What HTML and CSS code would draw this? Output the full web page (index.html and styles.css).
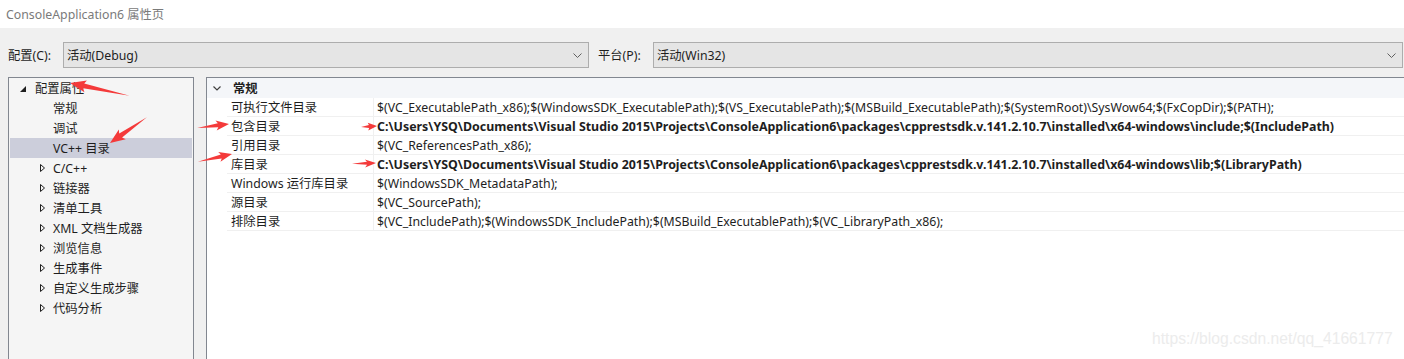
FILE: index.html
```html
<!DOCTYPE html>
<html>
    <head>
        <title>ConsoleApplication6 属性页</title>
        <link rel="stylesheet" href="styles.css">
    </head>
    <body>

        <!-- Titre -->
        <div class="titlebar">ConsoleApplication6 属性页</div>

        <!-- Configuration / plateforme -->
        <div class="config">
            <span class="label">配置(C):</span>
            <div class="combo combo-config">
                <span>活动(Debug)</span>
                <svg class="chevron" width="9" height="5" viewBox="0 0 9 5"><polyline points="0.5,0.5 4.5,4.5 8.5,0.5" fill="none" stroke="#606060" stroke-width="1"/></svg>
            </div>
            <span class="label label-platform">平台(P):</span>
            <div class="combo combo-platform">
                <span>活动(Win32)</span>
                <svg class="chevron" width="9" height="5" viewBox="0 0 9 5"><polyline points="0.5,0.5 4.5,4.5 8.5,0.5" fill="none" stroke="#606060" stroke-width="1"/></svg>
            </div>
        </div>

        <div class="main">
            <!-- Arbre -->
            <div class="tree">
                <div class="node root">
                    <svg class="expander" width="6" height="6" viewBox="0 0 6 6"><polygon points="6,0 6,6 0,6" fill="#1e1e1e"/></svg>
                    <span>配置属性</span>
                </div>
                <div class="node child"><span>常规</span></div>
                <div class="node child"><span>调试</span></div>
                <div class="node child selected"><span>VC++ 目录</span></div>
                <div class="node child folder"><svg class="collapsed" width="5" height="8" viewBox="0 0 5 8"><polygon points="0.5,0.5 4.5,4 0.5,7.5" fill="none" stroke="#1e1e1e" stroke-width="1"/></svg><span>C/C++</span></div>
                <div class="node child folder"><svg class="collapsed" width="5" height="8" viewBox="0 0 5 8"><polygon points="0.5,0.5 4.5,4 0.5,7.5" fill="none" stroke="#1e1e1e" stroke-width="1"/></svg><span>链接器</span></div>
                <div class="node child folder"><svg class="collapsed" width="5" height="8" viewBox="0 0 5 8"><polygon points="0.5,0.5 4.5,4 0.5,7.5" fill="none" stroke="#1e1e1e" stroke-width="1"/></svg><span>清单工具</span></div>
                <div class="node child folder"><svg class="collapsed" width="5" height="8" viewBox="0 0 5 8"><polygon points="0.5,0.5 4.5,4 0.5,7.5" fill="none" stroke="#1e1e1e" stroke-width="1"/></svg><span>XML 文档生成器</span></div>
                <div class="node child folder"><svg class="collapsed" width="5" height="8" viewBox="0 0 5 8"><polygon points="0.5,0.5 4.5,4 0.5,7.5" fill="none" stroke="#1e1e1e" stroke-width="1"/></svg><span>浏览信息</span></div>
                <div class="node child folder"><svg class="collapsed" width="5" height="8" viewBox="0 0 5 8"><polygon points="0.5,0.5 4.5,4 0.5,7.5" fill="none" stroke="#1e1e1e" stroke-width="1"/></svg><span>生成事件</span></div>
                <div class="node child folder"><svg class="collapsed" width="5" height="8" viewBox="0 0 5 8"><polygon points="0.5,0.5 4.5,4 0.5,7.5" fill="none" stroke="#1e1e1e" stroke-width="1"/></svg><span>自定义生成步骤</span></div>
                <div class="node child folder"><svg class="collapsed" width="5" height="8" viewBox="0 0 5 8"><polygon points="0.5,0.5 4.5,4 0.5,7.5" fill="none" stroke="#1e1e1e" stroke-width="1"/></svg><span>代码分析</span></div>
            </div>

            <!-- Grille de propriétés -->
            <div class="grid">
                <div class="category">
                    <svg class="cat-chevron" width="8" height="5" viewBox="0 0 8 5"><polyline points="0.5,0.5 4,4 7.5,0.5" fill="none" stroke="#404040" stroke-width="1.2"/></svg>
                    <span>常规</span>
                </div>
                <div class="prop"><div class="name">可执行文件目录</div><div class="value">$(VC_ExecutablePath_x86);$(WindowsSDK_ExecutablePath);$(VS_ExecutablePath);$(MSBuild_ExecutablePath);$(SystemRoot)\SysWow64;$(FxCopDir);$(PATH);</div></div>
                <div class="prop"><div class="name">包含目录</div><div class="value bold">C:\Users\YSQ\Documents\Visual Studio 2015\Projects\ConsoleApplication6\packages\cpprestsdk.v.141.2.10.7\installed\x64-windows\include;$(IncludePath)</div></div>
                <div class="prop"><div class="name">引用目录</div><div class="value">$(VC_ReferencesPath_x86);</div></div>
                <div class="prop"><div class="name">库目录</div><div class="value bold">C:\Users\YSQ\Documents\Visual Studio 2015\Projects\ConsoleApplication6\packages\cpprestsdk.v.141.2.10.7\installed\x64-windows\lib;$(LibraryPath)</div></div>
                <div class="prop"><div class="name">Windows 运行库目录</div><div class="value">$(WindowsSDK_MetadataPath);</div></div>
                <div class="prop"><div class="name">源目录</div><div class="value">$(VC_SourcePath);</div></div>
                <div class="prop"><div class="name">排除目录</div><div class="value">$(VC_IncludePath);$(WindowsSDK_IncludePath);$(MSBuild_ExecutablePath);$(VC_LibraryPath_x86);</div></div>
            </div>
        </div>

        <!-- Flèches rouges par-dessus la capture -->
        <svg class="arrows" width="1404" height="359" viewBox="0 0 1404 359">
            <g fill="#f43a3a">
                <polygon transform="translate(70,83) rotate(192)" points="0,0 -16,-6 -14,-2.5 -61,0 -14,2.5 -16,6"/>
                <polygon transform="translate(110,143) rotate(145)" points="0,0 -15,-6 -13,-2.5 -45,0 -13,2.5 -15,6"/>
                <polygon transform="translate(229,124) rotate(-7)" points="0,0 -13,-5 -11,-2 -32,0 -11,2 -13,5"/>
                <polygon transform="translate(232,154) rotate(-13)" points="0,0 -13,-5 -11,-2 -35,0 -11,2 -13,5"/>
                <polygon transform="translate(377,126) rotate(-4)" points="0,0 -9,-4 -8,-1.5 -16,0 -8,1.5 -9,4"/>
                <polygon transform="translate(376,163) rotate(-2)" points="0,0 -11,-4 -9,-1.5 -24,0 -9,1.5 -11,4"/>
            </g>
        </svg>

        <div class="watermark">https://blog.csdn.net/qq_41661777</div>

    </body>
</html>
```

FILE: styles.css
```css
body {
    margin: 0;
    background-color: #f0f0f0;
    font-family: "Noto Sans", "Noto Sans CJK SC", sans-serif;
    font-size: 12.3px;
    color: #1e1e1e;
    height: 359px;
    overflow: hidden;
    position: relative;
}

.titlebar {
    height: 28px;
    background-color: #ffffff;
    color: #7a7a7a;
    padding-left: 6px;
    display: flex;
    align-items: center;
}

.config {
    display: flex;
    align-items: center;
    margin-top: 14px;
    padding-left: 8px;
    height: 26px;
}

.label {
    width: 55px;
}

.label-platform {
    margin-left: 9px;
}

.combo {
    box-sizing: border-box;
    height: 26px;
    border: 1px solid #adadad;
    background-color: #e5e5e5;
    display: flex;
    align-items: center;
    justify-content: space-between;
    padding: 0 6px 0 3px;
}

.combo-config {
    width: 526px;
}

.combo-platform {
    width: 750px;
}

.main {
    display: flex;
    margin-top: 9px;
    padding-left: 8px;
    gap: 12px;
    height: 282px;
}

.tree {
    box-sizing: border-box;
    width: 186px;
    border: 1px solid #828790;
    border-bottom: none;
    background-color: #f5f5f5;
    padding: 0 1px;
}

.node {
    height: 20px;
    display: flex;
    align-items: center;
    white-space: nowrap;
}

.root {
    padding-left: 10px;
}

.root .expander {
    margin-right: 9px;
    margin-top: 1px;
}

.child {
    padding-left: 43px;
}

.folder {
    padding-left: 30px;
}

.folder .collapsed {
    margin-right: 8px;
}

.selected {
    background-color: #cccedb;
}

.grid {
    flex: 1;
    background-color: #ffffff;
    border-top: 1px solid #828790;
    border-left: 1px solid #828790;
}

.category {
    height: 20px;
    background-color: #f4f6f9;
    display: flex;
    align-items: center;
    padding-left: 6px;
    font-weight: bold;
}

.cat-chevron {
    margin-right: 12px;
}

.prop {
    display: flex;
    height: 19px;
    margin-left: 20px;
    border-bottom: 1px solid #f0f0f0;
    box-sizing: border-box;
    white-space: nowrap;
}

.name {
    width: 147px;
    padding-left: 4px;
    box-sizing: border-box;
    border-right: 1px solid #f0f0f0;
    display: flex;
    align-items: center;
}

.value {
    padding-left: 3px;
    display: flex;
    align-items: center;
}

.bold {
    font-weight: bold;
    font-size: 12.4px;
}

.arrows {
    position: absolute;
    top: 0;
    left: 0;
    pointer-events: none;
}

.watermark {
    position: absolute;
    left: 1152px;
    top: 330px;
    font-family: "Liberation Sans", sans-serif;
    font-size: 15.7px;
    color: #ececec;
}
```
